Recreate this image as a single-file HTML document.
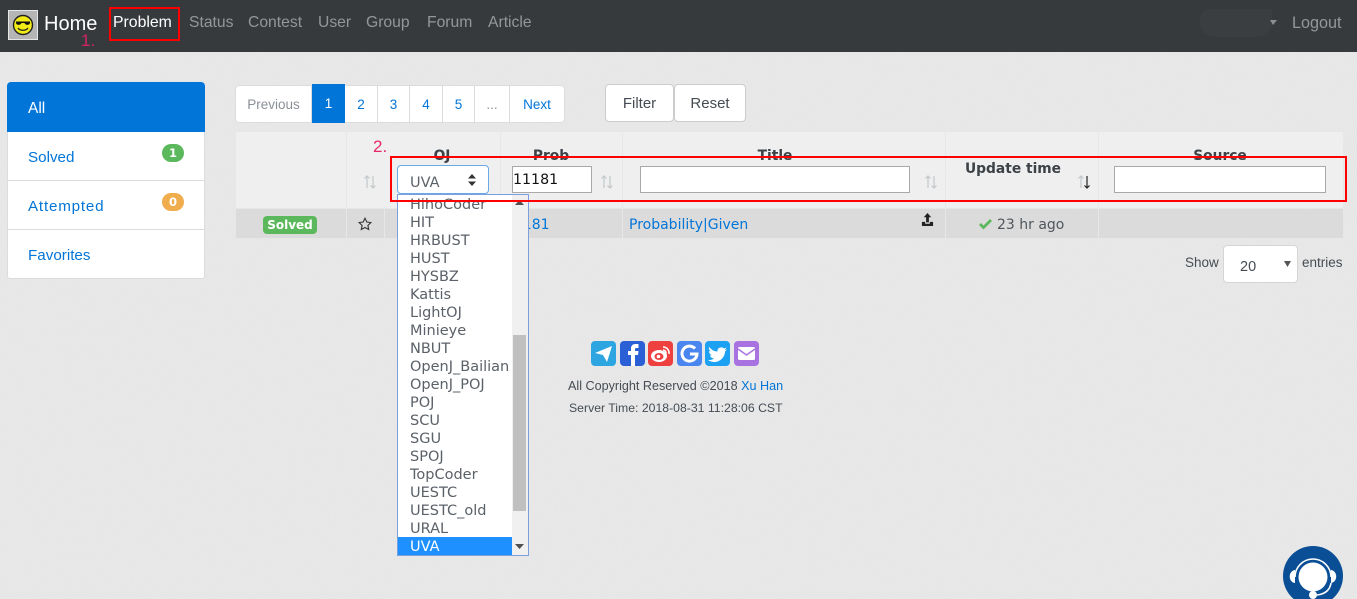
<!DOCTYPE html>
<html><head><meta charset="utf-8">
<style>
html,body{margin:0;padding:0}
body{width:1357px;height:599px;overflow:hidden;position:relative;background:#e9e9e9;font-family:"Liberation Sans",sans-serif;font-size:14px;color:#454c53}
div,a{position:absolute;white-space:nowrap;box-sizing:border-box}
.nav{font-size:15.7px;top:14px;line-height:18px;color:#94979a}
.side{left:7px;width:198px;background:#fff;border:1px solid #dcdcdc;border-top:none}
.lnk{color:#0275d8}
.pg{top:85px;height:38px;background:#fff;border:1px solid #dcdcdc;border-left:none;text-align:center;line-height:38px;color:#0275d8;font-size:13.5px}
.btn{top:84px;height:38px;background:#fff;border:1px solid #ccc;border-radius:4px;text-align:center;line-height:38px;color:#454c53;font-size:15px}
.th{background:#efefef;top:132px;height:76px}
.td{background:#dbdbdb;top:209px;height:29px}
.hd{font-family:"DejaVu Sans",sans-serif;font-weight:bold;font-size:13.8px;color:#3c4247;line-height:16px;text-align:center}
.inp{top:166px;height:27px;background:#fff;border:1px solid #a9a9a9}
.dd{font-family:"DejaVu Sans",sans-serif;font-size:14.5px;left:410px;line-height:18px;color:#5b6168}
.red{border:2px solid #f00;background:transparent}
.soc{top:341px;width:25px;height:25px;border-radius:4px}
</style></head><body>

<svg style="position:absolute;left:0;top:0" width="1357" height="599"><filter id="n"><feTurbulence type="fractalNoise" baseFrequency="0.9" numOctaves="2"/><feColorMatrix type="saturate" values="0"/></filter><rect width="1357" height="599" filter="url(#n)" opacity="0.08"/></svg>

<div style="left:0;top:0;width:1357px;height:52px;background:#373a3d"></div>
<div style="left:8px;top:10px;width:30px;height:30px;background:#b5b5b5;border:1px solid #e6e6e6"></div>
<svg style="position:absolute;left:12px;top:14px" width="22" height="22" viewBox="0 0 22 22"><circle cx="11" cy="11" r="9.5" fill="#f2ec16" stroke="#222" stroke-width="1.4"/><path d="M4 7.500h14v1.500c-.5 2.500-4.500 2.500-5.500 0h-3c-1 2.500-5 2.500-5.500 0z" fill="#111"/><path d="M6 14c2 3 8 3 10 0" fill="none" stroke="#222" stroke-width="1.3"/></svg>
<div style="left:44px;top:12px;font-size:20px;line-height:24px;color:#fff">Home</div>
<div class="nav" style="left:113px;color:#fff;font-size:15.8px">Problem</div>
<div class="nav" style="left:189px">Status</div>
<div class="nav" style="left:248px">Contest</div>
<div class="nav" style="left:318px">User</div>
<div class="nav" style="left:366px">Group</div>
<div class="nav" style="left:427px">Forum</div>
<div class="nav" style="left:488px">Article</div>
<div class="nav" style="left:1292px;font-size:16.2px">Logout</div>
<div style="left:1200px;top:9px;width:72px;height:28px;background:#3b3e41;border-radius:10px 0 14px 14px"></div>
<svg style="position:absolute;left:1270px;top:20px" width="7" height="5"><path d="M0 0h7L3 5z" fill="#8c8f92"/></svg>
<div class="red" style="left:109px;top:7px;width:71px;height:34px"></div>
<div style="left:81px;top:31px;font-size:17px;line-height:20px;color:#d5245f">1.</div>

<div style="left:7px;top:82px;width:198px;height:50px;background:#0275d8;border-radius:4px 4px 0 0;color:#fff;font-size:15.5px;line-height:54px;padding-left:21px">All</div>
<div class="side lnk" style="top:132px;height:49px;font-size:15.2px;line-height:52px;padding-left:20px">Solved</div>
<div class="side lnk" style="top:181px;height:49px;font-size:15.2px;line-height:52px;padding-left:20px;letter-spacing:.8px">Attempted</div>
<div class="side lnk" style="top:230px;height:49px;font-size:15.2px;line-height:52px;padding-left:20px;border-radius:0 0 3px 3px">Favorites</div>
<div style="left:162px;top:144px;width:22px;height:18px;border-radius:9px;background:#5cb85c;color:#fff;font:bold 11.5px/18px 'DejaVu Sans',sans-serif;text-align:center">1</div>
<div style="left:162px;top:193px;width:22px;height:18px;border-radius:9px;background:#f0ad4e;color:#fff;font:bold 11.5px/18px 'DejaVu Sans',sans-serif;text-align:center">0</div>

<div class="pg" style="left:235px;width:77px;border-left:1px solid #dcdcdc;border-radius:4px 0 0 4px;color:#8b9096">Previous</div>
<div class="pg" style="left:312px;width:33px;top:84px;height:39px;background:#0275d8;border:none;color:#fff;line-height:39px">1</div>
<div class="pg" style="left:345px;width:33px">2</div>
<div class="pg" style="left:378px;width:32px">3</div>
<div class="pg" style="left:410px;width:33px">4</div>
<div class="pg" style="left:443px;width:32px">5</div>
<div class="pg" style="left:475px;width:35px;color:#8b9096">...</div>
<div class="pg" style="left:510px;width:55px;border-radius:0 4px 4px 0">Next</div>
<div class="btn" style="left:605px;width:69px">Filter</div>
<div class="btn" style="left:674px;width:72px">Reset</div>

<div class="th" style="left:236px;width:110px"></div>
<div class="th" style="left:347px;width:153px"></div>
<div class="th" style="left:501px;width:121px"></div>
<div class="th" style="left:623px;width:322px"></div>
<div class="th" style="left:946px;width:152px"></div>
<div class="th" style="left:1099px;width:244px"></div>

<div class="hd" style="left:347px;width:190px;top:148px">OJ</div>
<div class="hd" style="left:501px;width:100px;top:148px">Prob</div>
<div class="hd" style="left:640px;width:270px;top:148px">Title</div>
<div class="hd" style="left:946px;width:134px;top:161px">Update time</div>
<div class="hd" style="left:1114px;width:212px;top:148px">Source</div>

<svg style="position:absolute;left:363px;top:175px" width="14" height="14"><path d="M4 13V1M1.500 3.500L4 1l2.500 2.500M10 1v12M7.500 10.500L10 13l2.500-2.500" fill="none" stroke="#c3c7ca" stroke-width="1.2"/></svg>
<svg style="position:absolute;left:600px;top:175px" width="14" height="14"><path d="M4 13V1M1.500 3.500L4 1l2.500 2.500M10 1v12M7.500 10.500L10 13l2.500-2.500" fill="none" stroke="#c3c7ca" stroke-width="1.2"/></svg>
<svg style="position:absolute;left:924px;top:175px" width="14" height="14"><path d="M4 13V1M1.500 3.500L4 1l2.500 2.500M10 1v12M7.500 10.500L10 13l2.500-2.500" fill="none" stroke="#c3c7ca" stroke-width="1.2"/></svg>
<svg style="position:absolute;left:1077px;top:175px" width="14" height="14"><path d="M4 13V1M1.500 3.500L4 1l2.500 2.500" fill="none" stroke="#c3c7ca" stroke-width="1.2"/><path d="M10 1v12M7.500 10.500L10 13l2.500-2.500" fill="none" stroke="#222" stroke-width="1.2"/></svg>

<div style="left:397px;top:165px;width:92px;height:29px;background:#fff;border:1px solid #6aa8e6;border-radius:4px"></div>
<div class="dd" style="left:410px;top:174px">UVA</div>
<svg style="position:absolute;left:467px;top:174px" width="10" height="12"><path d="M5 0l4 4.500H1zM5 12L1 7.500h8z" fill="#333"/></svg>
<div class="inp" style="left:512px;width:80px"></div>
<div style="left:513px;top:171px;font:14.2px/18px 'DejaVu Sans',sans-serif;color:#111">11181</div>
<div class="inp" style="left:640px;width:270px"></div>
<div class="inp" style="left:1114px;width:212px"></div>

<div class="td" style="left:236px;width:110px"></div>
<div class="td" style="left:347px;width:37px"></div>
<div class="td" style="left:385px;width:237px"></div>
<div class="td" style="left:623px;width:322px"></div>
<div class="td" style="left:946px;width:152px"></div>
<div class="td" style="left:1099px;width:244px"></div>
<div style="left:263px;top:216px;width:54px;height:18px;background:#5cb85c;border-radius:4px;color:#fff;font:bold 12px/18px 'DejaVu Sans',sans-serif;text-align:center">Solved</div>
<svg style="position:absolute;left:358px;top:217px" width="14" height="14" viewBox="0 0 14 14"><path d="M7 1.200l1.800 3.800 4.100.5-3 2.900.8 4.100L7 10.500l-3.700 2 .8-4.100-3-2.900 4.100-.5z" fill="none" stroke="#333" stroke-width="1.1"/></svg>
<div style="left:505px;top:216px;font:14px/18px 'DejaVu Sans',sans-serif;color:#0275d8">11181</div>
<div style="left:629px;top:216px;font:14px/18px 'DejaVu Sans',sans-serif;color:#0275d8">Probability|Given</div>
<svg style="position:absolute;left:921px;top:213px" width="13" height="14" viewBox="0 0 14 15"><path d="M7 0l4 4.500H8.500V10h-3V4.500H3zM1 9.500h3.500v2h5v-2H13V14H1z" fill="#222"/></svg>
<svg style="position:absolute;left:979px;top:218px" width="13" height="12" viewBox="0 0 13 12"><path d="M1 6l3.500 3.500L12 2" fill="none" stroke="#5cb85c" stroke-width="2.8"/></svg>
<div style="left:997px;top:216px;font:14px/18px 'DejaVu Sans',sans-serif;color:#50565c">23 hr ago</div>

<div style="left:397px;top:194px;width:132px;height:362px;background:#fff;border:1px solid #7a9fdc;overflow:hidden"></div>
<div style="left:398px;top:537px;width:114px;height:18px;background:#1e90ff"></div>
<div style="left:512px;top:195px;width:16px;height:360px;background:#f0f0f0"></div>
<div style="left:513px;top:335px;width:13px;height:176px;background:#c0c0c0"></div>
<svg style="position:absolute;left:515px;top:200px" width="9" height="6"><path d="M4.500 0L9 5H0z" fill="#505050"/></svg>
<svg style="position:absolute;left:515px;top:544px" width="9" height="6"><path d="M4.500 5L9 0H0z" fill="#505050"/></svg>
<div style="left:398px;top:196px;width:114px;height:359px;overflow:hidden">
<div class="dd" style="left:12px;top:0px">HihoCoder</div>
<div class="dd" style="left:12px;top:18px">HIT</div>
<div class="dd" style="left:12px;top:36px">HRBUST</div>
<div class="dd" style="left:12px;top:54px">HUST</div>
<div class="dd" style="left:12px;top:72px">HYSBZ</div>
<div class="dd" style="left:12px;top:90px">Kattis</div>
<div class="dd" style="left:12px;top:108px">LightOJ</div>
<div class="dd" style="left:12px;top:126px">Minieye</div>
<div class="dd" style="left:12px;top:144px">NBUT</div>
<div class="dd" style="left:12px;top:162px">OpenJ_Bailian</div>
<div class="dd" style="left:12px;top:180px">OpenJ_POJ</div>
<div class="dd" style="left:12px;top:198px">POJ</div>
<div class="dd" style="left:12px;top:216px">SCU</div>
<div class="dd" style="left:12px;top:234px">SGU</div>
<div class="dd" style="left:12px;top:252px">SPOJ</div>
<div class="dd" style="left:12px;top:270px">TopCoder</div>
<div class="dd" style="left:12px;top:288px">UESTC</div>
<div class="dd" style="left:12px;top:306px">UESTC_old</div>
<div class="dd" style="left:12px;top:324px">URAL</div>
<div class="dd" style="left:12px;top:342px;color:#fff">UVA</div>
</div>

<div class="red" style="left:390px;top:156px;width:957px;height:46px"></div>
<div style="left:373px;top:137px;font-size:17px;line-height:20px;color:#e8286a">2.</div>

<div style="left:1185px;top:254px;font-size:13.5px;line-height:18px">Show</div>
<div style="left:1223px;top:245px;width:75px;height:38px;background:#fff;border:1px solid #d5d5d5;border-radius:4px;font-size:14.5px;line-height:42px;padding-left:16px">20</div>
<svg style="position:absolute;left:1284px;top:261px" width="7" height="6"><path d="M0 0h7L3.500 6z" fill="#555"/></svg>
<div style="left:1302px;top:254px;font-size:13.5px;line-height:18px">entries</div>

<div class="soc" style="left:591px;background:#2ca5e0"></div>
<svg style="position:absolute;left:591px;top:341px" width="25" height="25"><path d="M4 12L21 5l-5 16-4-7z" fill="#fff"/></svg>
<div class="soc" style="left:620px;background:#2a5fd6"></div>
<svg style="position:absolute;left:620px;top:341px" width="25" height="25"><path d="M11 25V14H8v-4h3V7.500C11 4.500 13 3 15.500 3H18.500v4h-2c-1 0-1.500.5-1.500 1.500V10h3.500l-.5 4h-3v11z" fill="#fff"/></svg>
<div class="soc" style="left:648px;background:#ef4040"></div>
<svg style="position:absolute;left:648px;top:341px" width="25" height="25"><ellipse cx="11" cy="15" rx="8" ry="6" fill="#fff"/><ellipse cx="11" cy="15.500" rx="4.500" ry="3.500" fill="#ef4040"/><circle cx="10.500" cy="15.500" r="1.800" fill="#fff"/><path d="M15 6a6 6 0 0 1 6 7M15 9a3 3 0 0 1 3 3.500" fill="none" stroke="#fff" stroke-width="1.6"/></svg>
<div class="soc" style="left:677px;background:#4a86f0"></div>
<svg style="position:absolute;left:677px;top:341px" width="25" height="25"><path d="M18 7.500A7.500 7.500 0 1 0 20 13h-7" fill="none" stroke="#fff" stroke-width="3"/></svg>
<div class="soc" style="left:705px;background:#1da1f2"></div>
<svg style="position:absolute;left:705px;top:341px" width="25" height="25"><path d="M4 6c3 3 5 4.500 8.500 4.500C12 7 16.500 5 19 7.500l2.500-1-1.500 2.500 2-.5-2 2C20 16 15 21 9.500 21 7 21 5 20.300 3 19c2.500.2 4.500-.3 6-1.800-2 0-3.500-1-4-3h2C5 13.500 4 12 4 10l2 .5C4 9 3.500 7.500 4 6z" fill="#fff"/></svg>
<div class="soc" style="left:734px;background:#a873e0"></div>
<svg style="position:absolute;left:734px;top:341px" width="25" height="25"><rect x="4" y="6" width="17" height="13" rx="1.500" fill="#fff"/><path d="M4 8l8.500 6L21 8" fill="none" stroke="#a873e0" stroke-width="1.5"/></svg>

<div style="left:568px;top:377px;font-size:12.6px;line-height:18px;color:#454c53">All Copyright Reserved ©2018 <span style="color:#0275d8">Xu Han</span></div>
<div style="left:569px;top:399px;font-size:12.25px;line-height:18px;color:#454c53">Server Time: 2018-08-31 11:28:06 CST</div>

<svg style="position:absolute;left:1283px;top:546px" width="60" height="53" viewBox="0 0 60 53"><circle cx="30" cy="30" r="30" fill="#0a4f96"/><path d="M12 31a18 18 0 0 1 36 0" fill="none" stroke="#fff" stroke-width="1.6"/><circle cx="30" cy="31" r="14.500" fill="#fff"/><path d="M12 24c-7 1-7 12 0 13zM48 24c7 1 7 12 0 13z" fill="#fff"/><path d="M48 37c-1 7-6 11-14 12" fill="none" stroke="#fff" stroke-width="1.6"/><circle cx="30" cy="49" r="4" fill="#fff"/></svg>
</body></html>
